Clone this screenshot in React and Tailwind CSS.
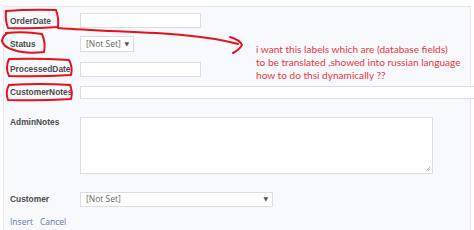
import React from "react";

const lbl = "w-[72px] shrink-0 pl-[6px] text-[8.4px] font-bold text-[#4c4c4c] leading-[12px] whitespace-nowrap";
const inp = "bg-white border border-[#dcdde2]";
const lf = { fontFamily: '"Liberation Sans", Arial, sans-serif' };

function Sel({ w, h }) {
  return (
    <div className={`${inp} ${w} ${h} flex items-center justify-between pl-[5px] pr-[4px] text-[8.5px] text-[#666]`}>
      <span>[Not Set]</span>
      <span className="text-[6px] text-[#555]">▼</span>
    </div>
  );
}

export default function App() {
  return (
    <div className="relative w-[474px] h-[230px] overflow-hidden bg-white" style={{ fontFamily: '"Open Sans", "DejaVu Sans", sans-serif' }}>
      <div className="ml-[3px] mt-[6px] w-[468px] h-[224px] border-l border-t border-r border-[#e6e8ee] bg-[#f8f9fc] flex flex-col">
        <div className="flex items-center h-[27px]">
          <div className={lbl} style={lf}>OrderDate</div>
          <div className="pl-[4px]"><div className={`${inp} w-[121px] h-[15px]`} /></div>
        </div>
        <div className="flex items-center h-[20px]">
          <div className={lbl} style={lf}>Status</div>
          <div className="pl-[4px]"><Sel w="w-[54px]" h="h-[16px]" /></div>
        </div>
        <div className="flex items-center h-[30px]">
          <div className={lbl} style={lf}>ProcessedDate</div>
          <div className="pl-[4px]"><div className={`${inp} w-[121px] h-[15px]`} /></div>
        </div>
        <div className="flex items-center h-[16px]">
          <div className={lbl} style={lf}>CustomerNotes</div>
          <div className="pl-[4px] flex-1"><div className={`${inp} w-[400px] h-[13px]`} /></div>
        </div>
        <div className="flex items-start h-[84px]">
          <div className={`${lbl} mt-[16px]`} style={lf}>AdminNotes</div>
          <div className="pl-[4px] mt-[17px]">
            <div className={`${inp} relative w-[353px] h-[57px]`}>
              <svg className="absolute right-[1px] bottom-[1px]" width="6" height="6" viewBox="0 0 6 6">
                <path d="M5 1 L1 5 M5 3 L3 5" stroke="#999" strokeWidth="0.8" />
              </svg>
            </div>
          </div>
        </div>
        <div className="flex items-center h-[30px]">
          <div className={lbl} style={lf}>Customer</div>
          <div className="pl-[4px]"><Sel w="w-[193px]" h="h-[15px]" /></div>
        </div>
        <div className="flex items-center h-[16px] pl-[6px] gap-[7px] text-[8.5px] text-[#5b79b0]">
          <span>Insert</span>
          <span>Cancel</span>
        </div>
      </div>

      <div className="absolute left-[256px] top-[43px] text-[10.1px] leading-[13px] text-[#e6383f]" style={{ fontFamily: 'Lato, "Open Sans", sans-serif' }}>
        <div>i want this labels which are (database fields)</div>
        <div>to be translated ,showed into russian language</div>
        <div>how to do thsi dynamically ??</div>
      </div>

      <svg className="absolute left-0 top-0" width="474" height="230" viewBox="0 0 474 230" fill="none" stroke="#e3121c" strokeWidth="2" strokeLinecap="round" strokeLinejoin="round">
        <path d="M6 11 Q30 9 56 10 Q59 18 58 27 Q30 29 8 28 Q5 20 6 11" />
        <path d="M58 28 C120 33 190 31 238 44" />
        <path d="M230 37 Q240 40 242 45 Q239 50 233 53" />
        <path d="M6 33 Q25 31 42 34 Q46 43 44 52 Q25 54 14 50 Q3 47 2 41 Q3 35 8 33" />
        <path d="M9 59 Q40 58 69 60 Q73 67 71 75 Q40 77 9 76 Q5 68 9 59" />
        <path d="M9 85 Q40 83 70 85 Q73 92 71 99 Q40 101 8 100 Q5 92 9 85" />
      </svg>
    </div>
  );
}
